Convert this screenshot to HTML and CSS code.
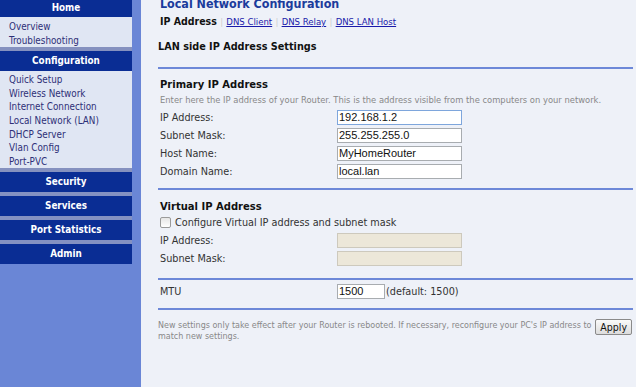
FILE: index.html
```html
<!DOCTYPE html>
<html>
<head>
<meta charset="utf-8">
<link rel="stylesheet" href="styles.css">
</head>
<body>
<div class="page">
  <nav class="sidebar">
    <div class="menu">
      <div class="menu-head first">Home</div>
      <div class="menu-items top">
        <a class="menu-item">Overview</a>
        <a class="menu-item">Troubleshooting</a>
      </div>
      <div class="menu-head">Configuration</div>
      <div class="menu-items">
        <a class="menu-item">Quick Setup</a>
        <a class="menu-item">Wireless Network</a>
        <a class="menu-item">Internet Connection</a>
        <a class="menu-item">Local Network (LAN)</a>
        <a class="menu-item">DHCP Server</a>
        <a class="menu-item">Vlan Config</a>
        <a class="menu-item">Port-PVC</a>
      </div>
      <div class="menu-head">Security</div>
      <div class="menu-head">Services</div>
      <div class="menu-head">Port Statistics</div>
      <div class="menu-head">Admin</div>
    </div>
  </nav>
  <main class="content">
    <h1 class="title">Local Network Configuration</h1>
    <div class="tabs">
      <span class="tab-current">IP Address</span>
      <span class="sep">|</span>
      <a class="tab-link">DNS Client</a>
      <span class="sep">|</span>
      <a class="tab-link">DNS Relay</a>
      <span class="sep">|</span>
      <a class="tab-link">DNS LAN Host</a>
    </div>
    <h2 class="subtitle">LAN side IP Address Settings</h2>
    <hr class="rule first-rule">
    <section class="block">
      <h3 class="block-title">Primary IP Address</h3>
      <p class="hint">Enter here the IP address of your Router. This is the address visible from the computers on your network.</p>
      <div class="row"><span class="label">IP Address:</span><span class="field focus">192.168.1.2</span></div>
      <div class="row"><span class="label">Subnet Mask:</span><span class="field">255.255.255.0</span></div>
      <div class="row"><span class="label">Host Name:</span><span class="field">MyHomeRouter</span></div>
      <div class="row"><span class="label">Domain Name:</span><span class="field">local.lan</span></div>
    </section>
    <hr class="rule">
    <section class="block second">
      <h3 class="block-title">Virtual IP Address</h3>
      <div class="check-row"><span class="checkbox"></span>Configure Virtual IP address and subnet mask</div>
      <div class="row"><span class="label">IP Address:</span><span class="field disabled"></span></div>
      <div class="row"><span class="label">Subnet Mask:</span><span class="field disabled"></span></div>
    </section>
    <hr class="rule">
    <div class="row mtu-row"><span class="label">MTU</span><span class="field short">1500</span><span class="default">(default: 1500)</span></div>
    <hr class="rule">
    <div class="footer">
      <p class="note">New settings only take effect after your Router is rebooted. If necessary, reconfigure your PC's IP address to match new settings.</p>
      <button class="apply">Apply</button>
    </div>
  </main>
</div>
</body>
</html>
```

FILE: styles.css
```css
html, body {
  margin: 0;
  padding: 0;
  height: 100%;
  overflow: hidden;
}
body {
  font-family: "DejaVu Sans", Verdana, sans-serif;
  background: #eef1f8;
}
.page {
  display: flex;
  height: 387px;
}
.sidebar {
  width: 141px;
  flex: none;
  background: #6a86d6;
}
.menu {
  width: 132px;
  display: flex;
  flex-direction: column;
}
.menu-head {
  height: 20px;
  line-height: 20px;
  background: #0a2d94;
  color: #fff;
  font-family: "DejaVu Sans Condensed", "DejaVu Sans", sans-serif;
  font-stretch: condensed;
  font-weight: bold;
  font-size: 9.8px;
  text-align: center;
  border-top: 4px solid #8491c2;
}
.menu-head.first {
  height: 17px;
  line-height: 15px;
  border-top: none;
}
.menu-items {
  background: #e0e6f3;
  display: flex;
  flex-direction: column;
  padding: 2px 0 0 9px;
}
.menu-items.top {
  padding-top: 3px;
}
.menu-items + .menu-head {
  border-top-color: #8591bf;
}
.menu-item {
  font-family: "DejaVu Sans Condensed", "DejaVu Sans", sans-serif;
  font-stretch: condensed;
  font-size: 9.8px;
  line-height: 13.6px;
  color: #2e2f77;
}
.content {
  flex: 1;
  padding: 0 3px 0 17px;
  color: #222;
}
.title {
  margin: -4px 0 0 2px;
  font-family: "DejaVu Sans Condensed", "DejaVu Sans", sans-serif;
  font-stretch: condensed;
  font-size: 12.4px;
  line-height: 15px;
  color: #1b3b9c;
}
.tabs {
  margin: 3px 0 0 2px;
  height: 14px;
  line-height: 14px;
  display: flex;
  align-items: baseline;
  gap: 3.5px;
  font-family: "DejaVu Sans Condensed", "DejaVu Sans", sans-serif;
  font-stretch: condensed;
}
.tab-current {
  font-weight: bold;
  font-size: 10.5px;
  color: #111;
}
.sep {
  color: #c8c8c8;
  font-size: 8px;
}
.tab-link {
  color: #1a1aaa;
  text-decoration: underline;
  font-size: 9.5px;
}
.subtitle {
  margin: 12px 0 0 0;
  font-size: 9.7px;
  line-height: 14px;
  color: #111;
}
.rule {
  border: none;
  height: 2px;
  background: #6d88d8;
  margin: 0;
}
.first-rule {
  margin-top: 13px;
}
.block {
  padding: 9px 0 8px 2px;
}
.block.second {
  padding: 10px 0 11px 2px;
}
.block-title {
  margin: 0;
  font-size: 10px;
  line-height: 14px;
  color: #111;
}
.hint {
  margin: 2px 0 2px 0;
  font-size: 8.4px;
  line-height: 12px;
  color: #888;
  white-space: nowrap;
}
.row {
  display: flex;
  align-items: center;
  height: 18px;
  font-size: 9.7px;
  color: #333;
}
.label {
  width: 177px;
  flex: none;
}
.field {
  box-sizing: border-box;
  width: 125px;
  height: 15px;
  border: 1px solid #a8acb0;
  background: #fff;
  font-family: "Liberation Sans", Arial, sans-serif;
  font-size: 11px;
  line-height: 13px;
  padding-left: 1px;
  color: #111;
}
.field.focus {
  border-color: #7ea6dc;
}
.field.disabled {
  background: #ece7d9;
  border-color: #cdc9bd;
}
.field.short {
  width: 48px;
}
.default {
  margin-left: 1px;
}
.check-row {
  display: flex;
  align-items: center;
  height: 17px;
  font-size: 9.7px;
  color: #333;
}
.checkbox {
  box-sizing: border-box;
  width: 11px;
  height: 11px;
  border: 1px solid #9a9a9a;
  border-radius: 2px;
  background: linear-gradient(#e6e6e6, #ffffff);
  margin-right: 4px;
}
.mtu-row {
  margin: 2px 0 8px 2px;
}
.footer {
  display: flex;
  align-items: flex-start;
  justify-content: space-between;
  padding: 9px 1px 0 0;
}
.note {
  margin: 1px 0 0 0;
  width: 436px;
  font-size: 8px;
  line-height: 11px;
  color: #888;
}
.apply {
  margin-top: 0;
  height: 16px;
  padding: 0 4px;
  font-family: "DejaVu Sans Condensed", "DejaVu Sans", sans-serif;
  font-stretch: condensed;
  font-size: 10.5px;
  line-height: 14px;
  border: 1px solid #8a8a8a;
  border-radius: 2px;
  background: linear-gradient(#fafafa, #dcdcdc);
  color: #111;
}
```
